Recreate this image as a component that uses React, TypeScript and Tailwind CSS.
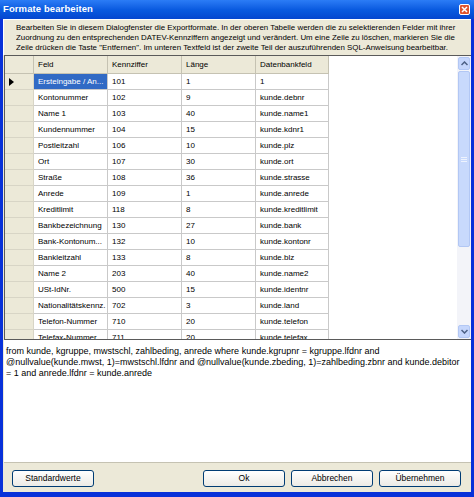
import React from 'react'

const font = { fontFamily: '"Liberation Sans", Arial, sans-serif' }

const rows: string[][] = [
  ['Ersteingabe / An...', '101', '1', '1'],
  ['Kontonummer', '102', '9', 'kunde.debnr'],
  ['Name 1', '103', '40', 'kunde.name1'],
  ['Kundennummer', '104', '15', 'kunde.kdnr1'],
  ['Postleitzahl', '106', '10', 'kunde.plz'],
  ['Ort', '107', '30', 'kunde.ort'],
  ['Straße', '108', '36', 'kunde.strasse'],
  ['Anrede', '109', '1', 'kunde.anrede'],
  ['Kreditlimit', '118', '8', 'kunde.kreditlimit'],
  ['Bankbezeichnung', '130', '27', 'kunde.bank'],
  ['Bank-Kontonum...', '132', '10', 'kunde.kontonr'],
  ['Bankleitzahl', '133', '8', 'kunde.blz'],
  ['Name 2', '203', '40', 'kunde.name2'],
  ['USt-IdNr.', '500', '15', 'kunde.identnr'],
  ['Nationalitätskennz.', '702', '3', 'kunde.land'],
  ['Telefon-Nummer', '710', '20', 'kunde.telefon'],
  ['Telefax-Nummer', '711', '20', 'kunde.telefax'],
]

const colW = ['w-[74px]', 'w-[74px]', 'w-[74px]', 'w-[73px]']

function XpButton({ label }: { label: string }) {
  return (
    <button className="w-[82px] h-[17px] rounded-[3px] border border-[#003c74] bg-gradient-to-b from-white to-[#ecebe6] text-[8.5px] text-black leading-none">
      {label}
    </button>
  )
}

export default function App() {
  return (
    <div style={font} className="w-[474px] h-[497px] bg-[#0831d9] flex flex-col px-[3px] pb-[5px] overflow-hidden">
      {/* Titelleiste */}
      <div className="h-[19px] -mx-[3px] flex items-center justify-between pl-[3px] pr-[4px] bg-gradient-to-b from-[#2b7cf6] via-[#0a5be0] to-[#0546cf]">
        <span className="text-white font-bold text-[9.5px] tracking-[0.1px]">Formate bearbeiten</span>
        <div className="w-[11px] h-[11px] rounded-[2px] border border-white bg-[#e0542e] flex items-center justify-center">
          <svg width="7" height="7" viewBox="0 0 7 7">
            <path d="M1 1 L6 6 M6 1 L1 6" stroke="white" strokeWidth="1.5" />
          </svg>
        </div>
      </div>

      <div className="flex-1 bg-[#ece9d8] flex flex-col">
        {/* Beschreibung */}
        <div className="h-[36px] border-t border-l border-white pl-[12px] pt-[3px] text-[7.9px] leading-[10px] text-black whitespace-nowrap">
          <div>Bearbeiten Sie in diesem Dialogfenster die Exportformate. In der oberen Tabelle werden die zu selektierenden Felder mit ihrer</div>
          <div>Zuordnung zu den entsprechenden DATEV-Kennziffern angezeigt und verändert. Um eine Zeile zu löschen, markieren Sie die</div>
          <div>Zeile drücken die Taste "Entfernen". Im unteren Textfeld ist der zweite Teil der auszuführenden SQL-Anweisung  bearbeitbar.</div>
        </div>

        {/* Tabelle */}
        <div className="h-[284px] ml-[1px] border-t border-l border-[#5a5a5a] bg-white flex overflow-hidden">
          <div className="flex-1 overflow-hidden text-[8px] text-black">
            <div className="flex h-[18px]">
              <div className="w-[29px] bg-[#ece9d8] border-r border-b border-[#c5c2b2]" />
              {['Feld', 'Kennziffer', 'Länge', 'Datenbankfeld'].map((h, i) => (
                <div key={h} className={`${colW[i]} bg-[#ece9d8] border-r border-b border-[#c5c2b2] pl-[4px] flex items-center`}>
                  {h}
                </div>
              ))}
            </div>
            {rows.map((r, ri) => (
              <div key={ri} className="flex h-[16px]">
                <div className="w-[29px] bg-[#ece9d8] border-r border-b border-[#d8d5c6] flex items-center pl-[4px]">
                  {ri === 0 && (
                    <svg width="5" height="8" viewBox="0 0 5 8">
                      <path d="M0 0 L5 4 L0 8 Z" fill="black" />
                    </svg>
                  )}
                </div>
                {r.map((c, ci) => (
                  <div
                    key={ci}
                    className={`${colW[ci]} border-r border-b border-[#c9c9c9] flex items-center pl-[4px] whitespace-nowrap overflow-hidden ${
                      ri === 0 && ci === 0 ? 'bg-[#316ac5] text-white' : ''
                    }`}
                  >
                    {c}
                  </div>
                ))}
              </div>
            ))}
          </div>

          {/* Scrollbar */}
          <div className="w-[14px] bg-[#f3f4f9] flex flex-col p-[1px] gap-[1px]">
            <div className="h-[13px] rounded-[2px] bg-[#c5d6fc] border border-[#b2c7f4] flex items-center justify-center">
              <svg width="7" height="5" viewBox="0 0 7 5">
                <path d="M0.5 4 L3.5 1 L6.5 4" stroke="#4d6185" strokeWidth="1.5" fill="none" />
              </svg>
            </div>
            <div className="h-[176px] rounded-[2px] bg-[#c8d9fc] border border-[#b2c7f4] flex flex-col items-center justify-center gap-[1px]">
              <div className="w-[6px] h-[1px] bg-[#eef3fe]" />
              <div className="w-[6px] h-[1px] bg-[#eef3fe]" />
              <div className="w-[6px] h-[1px] bg-[#eef3fe]" />
            </div>
            <div className="flex-1" />
            <div className="h-[13px] rounded-[2px] bg-[#c5d6fc] border border-[#b2c7f4] flex items-center justify-center">
              <svg width="7" height="5" viewBox="0 0 7 5">
                <path d="M0.5 1 L3.5 4 L6.5 1" stroke="#4d6185" strokeWidth="1.5" fill="none" />
              </svg>
            </div>
          </div>
        </div>

        {/* SQL-Textfeld */}
        <div className="h-[124px] ml-[1px] border-t border-[#5a5a5a] border-b border-b-[#c5c2b2] bg-white pl-[2px] pt-[6px] text-[9px] leading-[11px] text-black whitespace-nowrap">
          <div>from kunde, kgruppe, mwstschl, zahlbeding, anrede where kunde.kgrupnr = kgruppe.lfdnr and</div>
          <div>@nullvalue(kunde.mwst, 1)=mwstschl.lfdnr and @nullvalue(kunde.zbeding, 1)=zahlbeding.zbnr and kunde.debitor</div>
          <div>= 1 and anrede.lfdnr = kunde.anrede</div>
        </div>

        {/* Buttons */}
        <div className="flex-1 flex items-start pt-[7px] pl-[9px] pr-[10px]">
          <XpButton label="Standardwerte" />
          <div className="flex-1" />
          <div className="flex gap-[6px]">
            <XpButton label="Ok" />
            <XpButton label="Abbrechen" />
            <XpButton label="Übernehmen" />
          </div>
        </div>
      </div>
    </div>
  )
}
